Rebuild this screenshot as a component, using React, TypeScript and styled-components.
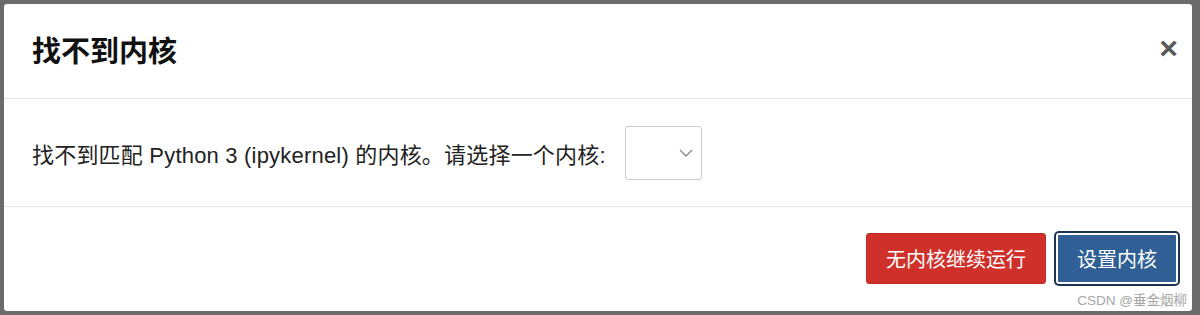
import React from "react";
import styled, { createGlobalStyle } from "styled-components";

const GlobalStyle = createGlobalStyle`
  html, body {
    margin: 0;
    padding: 0;
    background: #6b6b6b;
  }
  body {
    font-family: "Liberation Sans", "Noto Sans CJK SC", Arial, sans-serif;
  }
`;

const App = () => (
  <>
    <GlobalStyle />
    <Page>
      <Modal>
        <Header>
          <Title>找不到内核</Title>
          <Close aria-label="close">×</Close>
        </Header>
        <Body>
          <Message>找不到匹配 Python 3 (ipykernel) 的内核。请选择一个内核:</Message>
          <Select>
            <svg width="14" height="8" viewBox="0 0 14 8">
              <path d="M1 1 L7 7 L13 1" fill="none" stroke="#888" strokeWidth="1.4" />
            </svg>
          </Select>
        </Body>
        <Footer>
          <Button $variant="danger">无内核继续运行</Button>
          <Button $variant="primary">设置内核</Button>
        </Footer>
        <Watermark>CSDN @垂金烟柳</Watermark>
      </Modal>
    </Page>
  </>
);

const Page = styled.div`
  width: 1200px;
  height: 315px;
  padding: 4px 8px 4px 4px;
  box-sizing: border-box;
`;

const Modal = styled.div`
  position: relative;
  height: 307px;
  background: #fff;
  border-radius: 3px;
  display: flex;
  flex-direction: column;
`;

const Header = styled.div`
  height: 95px;
  box-sizing: border-box;
  display: flex;
  align-items: center;
  justify-content: space-between;
  padding: 0 14px 4px 28px;
  border-bottom: 1px solid #e5e5e5;
`;

const Title = styled.h1`
  margin: 0;
  font-size: 29px;
  font-weight: 700;
  color: #111;
`;

const Close = styled.span`
  font-size: 32px;
  font-weight: 700;
  color: #5a5a5a;
  line-height: 1;
  margin-top: -2px;
`;

const Body = styled.div`
  height: 108px;
  box-sizing: border-box;
  display: flex;
  align-items: center;
  gap: 19px;
  padding: 0 28px;
  border-bottom: 1px solid #e5e5e5;
`;

const Message = styled.span`
  font-size: 22px;
  letter-spacing: 0.2px;
  color: #222;
`;

const Select = styled.div`
  width: 77px;
  height: 54px;
  box-sizing: border-box;
  border: 1px solid #ccc;
  border-radius: 3px;
  display: flex;
  align-items: center;
  justify-content: flex-end;
  padding-right: 8px;
`;

const Footer = styled.div`
  flex: 1;
  display: flex;
  justify-content: flex-end;
  align-items: flex-start;
  gap: 10px;
  padding: 26px 14px 0 0;
`;

const Button = styled.button<{ $variant: "danger" | "primary" }>`
  height: 51px;
  padding: 0 19px;
  font-family: inherit;
  font-size: 20px;
  color: #fff;
  border-radius: 3px;
  cursor: pointer;
  background: ${(p) => (p.$variant === "danger" ? "#d0302a" : "#2f5f95")};
  border: ${(p) => (p.$variant === "danger" ? "1px solid #c42b25" : "2px solid #fff")};
  box-shadow: ${(p) => (p.$variant === "primary" ? "0 0 0 2px #1f3450" : "none")};
`;

const Watermark = styled.span`
  position: absolute;
  right: 5px;
  bottom: 2px;
  font-size: 13.5px;
  color: #a6a6a6;
`;

export default App;
